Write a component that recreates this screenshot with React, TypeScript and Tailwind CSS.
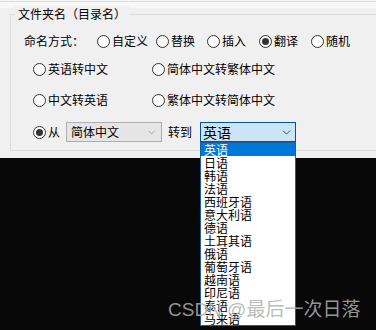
import { ChevronDown } from 'lucide-react';

const languages = ['英语', '日语', '韩语', '法语', '西班牙语', '意大利语', '德语', '土耳其语', '俄语', '葡萄牙语', '越南语', '印尼语', '泰语', '马来语'];

function Radio({ checked, label, className = '' }: { checked?: boolean; label: string; className?: string }) {
  return (
    <div className={`flex items-center gap-[2px] ${className}`}>
      <div className="w-[13px] h-[13px] rounded-full border border-[#333] bg-white flex items-center justify-center shrink-0">
        {checked && <div className="w-[7px] h-[7px] rounded-full bg-[#333]" />}
      </div>
      <span className="whitespace-nowrap">{label}</span>
    </div>
  );
}

export default function App() {
  return (
    <div className="relative w-[376px] h-[330px] overflow-hidden bg-[#f0f0f0] text-[12px] leading-[16px] text-black font-['Noto_Sans_CJK_SC','Microsoft_YaHei',sans-serif]">
      {/* top strip */}
      <div className="h-[1px] bg-[#f7f7f7]" />
      <div className="h-[1px] bg-[#dadada]" />
      <div className="h-[6px] bg-[#f7f7f7]" />

      {/* group box */}
      <div className="relative mt-[6px] ml-[10px] w-[400px] h-[137px] border border-[#dcdcdc]">
        <span className="absolute -top-[9px] left-[4px] px-[3px] bg-[#f0f0f0]">文件夹名（目录名）</span>

        {/* naming mode */}
        <div className="flex items-center h-[18px] mt-[17px] pl-[13px]">
          <span className="w-[73px]">命名方式：</span>
          <Radio label="自定义" className="w-[59px]" />
          <Radio label="替换" className="w-[51px]" />
          <Radio label="插入" className="w-[52px]" />
          <Radio checked label="翻译" className="w-[52px]" />
          <Radio label="随机" />
        </div>

        <div className="flex items-center h-[18px] mt-[10px] pl-[22px]">
          <Radio label="英语转中文" className="w-[119px]" />
          <Radio label="简体中文转繁体中文" />
        </div>

        <div className="flex items-center h-[18px] mt-[13px] pl-[22px]">
          <Radio label="中文转英语" className="w-[119px]" />
          <Radio label="繁体中文转简体中文" />
        </div>

        <div className="flex items-center h-[20px] mt-[13px] pl-[22px]">
          <Radio checked label="从" className="w-[33px]" />
          <div className="flex items-center justify-between w-[96px] h-[20px] border border-[#adadad] bg-[#e5e5e5] pl-[4px] pr-[4px]">
            <span>简体中文</span>
            <ChevronDown className="w-[11px] h-[11px] text-[#888]" strokeWidth={1.5} />
          </div>
          <span className="ml-[6px] w-[32px]">转到</span>
          <div className="flex items-center justify-between w-[96px] h-[20px] border border-[#005499] bg-[#cce4f7] pl-[2px] pr-[2px]">
            <span className="text-[14px]">英语</span>
            <ChevronDown className="w-[13px] h-[13px] text-[#444]" strokeWidth={1.75} />
          </div>
        </div>
      </div>

      <div className="absolute left-0 top-[158px] w-full h-[172px] bg-[#080808]" />

      {/* dropdown list */}
      <div className="absolute left-[200px] top-[142px] w-[96px] h-[184px] border border-[#1c5ea6] bg-white font-['Noto_Sans_CJK_SC','SimSun',sans-serif] text-[12px] leading-[13px]">
        {languages.map((lang, i) => (
          <div
            key={lang}
            className={`h-[13px] pl-[3px] whitespace-nowrap ${i === 0 ? 'bg-[#0078d7] text-white' : 'text-black'}`}
          >
            {lang}
          </div>
        ))}
      </div>

      {/* watermark */}
      <div className="absolute left-[168px] top-[298px] text-[19px] leading-[24px] whitespace-nowrap text-[rgba(175,175,175,0.85)] font-['Liberation_Sans','Noto_Sans_CJK_SC',sans-serif]">
        CSDN @最后一次日落
      </div>
    </div>
  );
}
